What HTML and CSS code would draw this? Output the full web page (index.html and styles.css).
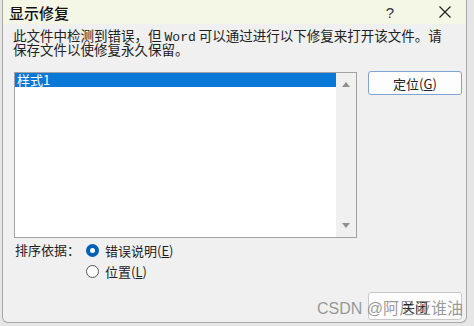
FILE: index.html
```html
<!DOCTYPE html>
<html lang="zh-CN">
<head>
    <meta charset="UTF-8">
    <title>显示修复</title>
    <link rel="stylesheet" href="styles.css">
</head>
<body>
    <div class="window">
        <div class="titlebar">
            <span class="title">显示修复</span>
            <span class="help">?</span>
            <span class="close-x">
                <svg width="14" height="14" viewBox="0 0 14 14"><path d="M1.5 1.5 L12.5 12.5 M12.5 1.5 L1.5 12.5" stroke="#222" stroke-width="1.2" fill="none"/></svg>
            </span>
        </div>

        <div class="content">
            <div class="desc">
                <div class="line">此文件中检测到错误，但 <span class="mono">Word</span> 可以通过进行以下修复来打开该文件。请</div>
                <div class="line">保存文件以使修复永久保留。</div>
            </div>

            <div class="main-row">
                <div class="listbox">
                    <div class="items">
                        <div class="item selected">样式1</div>
                    </div>
                    <div class="scrollbar">
                        <span class="arrow up"></span>
                        <span class="arrow down"></span>
                    </div>
                </div>
                <button class="btn">定位(<u>G</u>)</button>
            </div>

            <div class="sort-row">
                <span class="sort-label">排序依据：</span>
                <div class="options">
                    <label class="option"><span class="radio checked"></span>错误说明(<u>E</u>)</label>
                    <label class="option"><span class="radio"></span>位置(<u>L</u>)</label>
                </div>
            </div>

            <div class="footer">
                <button class="btn">关闭</button>
            </div>
        </div>

        <div class="watermark">CSDN @阿尼亚谁油</div>
    </div>
</body>
</html>
```

FILE: styles.css
```css
body {
    margin: 0;
    background-color: #e6e6e6;
    font-family: "Noto Sans CJK SC", sans-serif;
    color: #1e1e1e;
}

.window {
    position: relative;
    width: 463px;
    height: 322px;
    margin-left: 2px;
    background-color: #f0f0f0;
    border: 1px solid #a8a8a8;
    border-top: none;
    border-radius: 0 0 6px 6px;
    overflow: hidden;
}

.titlebar {
    display: flex;
    align-items: center;
    height: 24px;
    background-color: #f4f7e6;
    padding-left: 6px;
}

.title {
    font-size: 15px;
    font-weight: 500;
    color: #111;
    flex: 1;
}

.help {
    width: 20px;
    font-family: "Liberation Sans", sans-serif;
    font-size: 15px;
    color: #333;
    text-align: center;
}

.close-x {
    display: flex;
    justify-content: center;
    width: 14px;
    margin: 0 14px 0 38px;
}

.content {
    padding: 4px 0 0 10px;
}

.desc {
    font-size: 13.5px;
    color: #222;
}

.desc .line {
    height: 14px;
    line-height: 14px;
    white-space: nowrap;
}

.mono {
    font-family: "Liberation Mono", monospace;
    font-size: 13px;
}

.main-row {
    display: flex;
    align-items: flex-start;
    margin-top: 16px;
    padding-left: 1px;
}

.listbox {
    display: flex;
    width: 341px;
    height: 164px;
    border: 1px solid #a2a2a2;
    background-color: #fff;
}

.items {
    flex: 1;
}

.item {
    height: 14px;
    line-height: 14px;
    font-size: 13px;
    padding-left: 2px;
}

.item.selected {
    background-color: #0a78d7;
    color: #fff;
}

.scrollbar {
    display: flex;
    flex-direction: column;
    justify-content: space-between;
    align-items: center;
    width: 20px;
    background-color: #f0f0f0;
    padding: 9px 0 9px;
}

.arrow {
    width: 0;
    height: 0;
    border-left: 4px solid transparent;
    border-right: 4px solid transparent;
}

.arrow.up {
    border-bottom: 5px solid #909090;
}

.arrow.down {
    border-top: 5px solid #909090;
}

.btn {
    width: 94px;
    height: 24px;
    margin-left: 11px;
    background-color: #fdfdfd;
    border: 1px solid #7ea3d0;
    border-radius: 3px;
    font-family: "Noto Sans CJK SC", sans-serif;
    font-size: 13px;
    color: #222;
    padding: 0;
}

.main-row .btn {
    margin-top: -1px;
}

.sort-row {
    display: flex;
    margin-top: 2px;
    padding-left: 2px;
    font-size: 13px;
}

.sort-label {
    width: 71px;
    line-height: 20px;
}

.options {
    display: flex;
    flex-direction: column;
    gap: 1px;
}

.option {
    display: flex;
    align-items: center;
    height: 20px;
}

.radio {
    width: 11px;
    height: 11px;
    border: 1px solid #555;
    border-radius: 50%;
    background-color: #fff;
    margin-right: 6px;
}

.radio.checked {
    border: 4px solid #0060b8;
    width: 5px;
    height: 5px;
}

.footer {
    display: flex;
    justify-content: flex-end;
    margin-top: 11px;
    padding-right: 4px;
}

.footer .btn {
    border-color: #c8c8c8;
    height: 28px;
}

.watermark {
    position: absolute;
    right: 3px;
    bottom: 3px;
    font-family: "Liberation Sans", "Noto Sans CJK SC", sans-serif;
    font-size: 16px;
    color: rgba(120, 120, 120, 0.75);
}
```
